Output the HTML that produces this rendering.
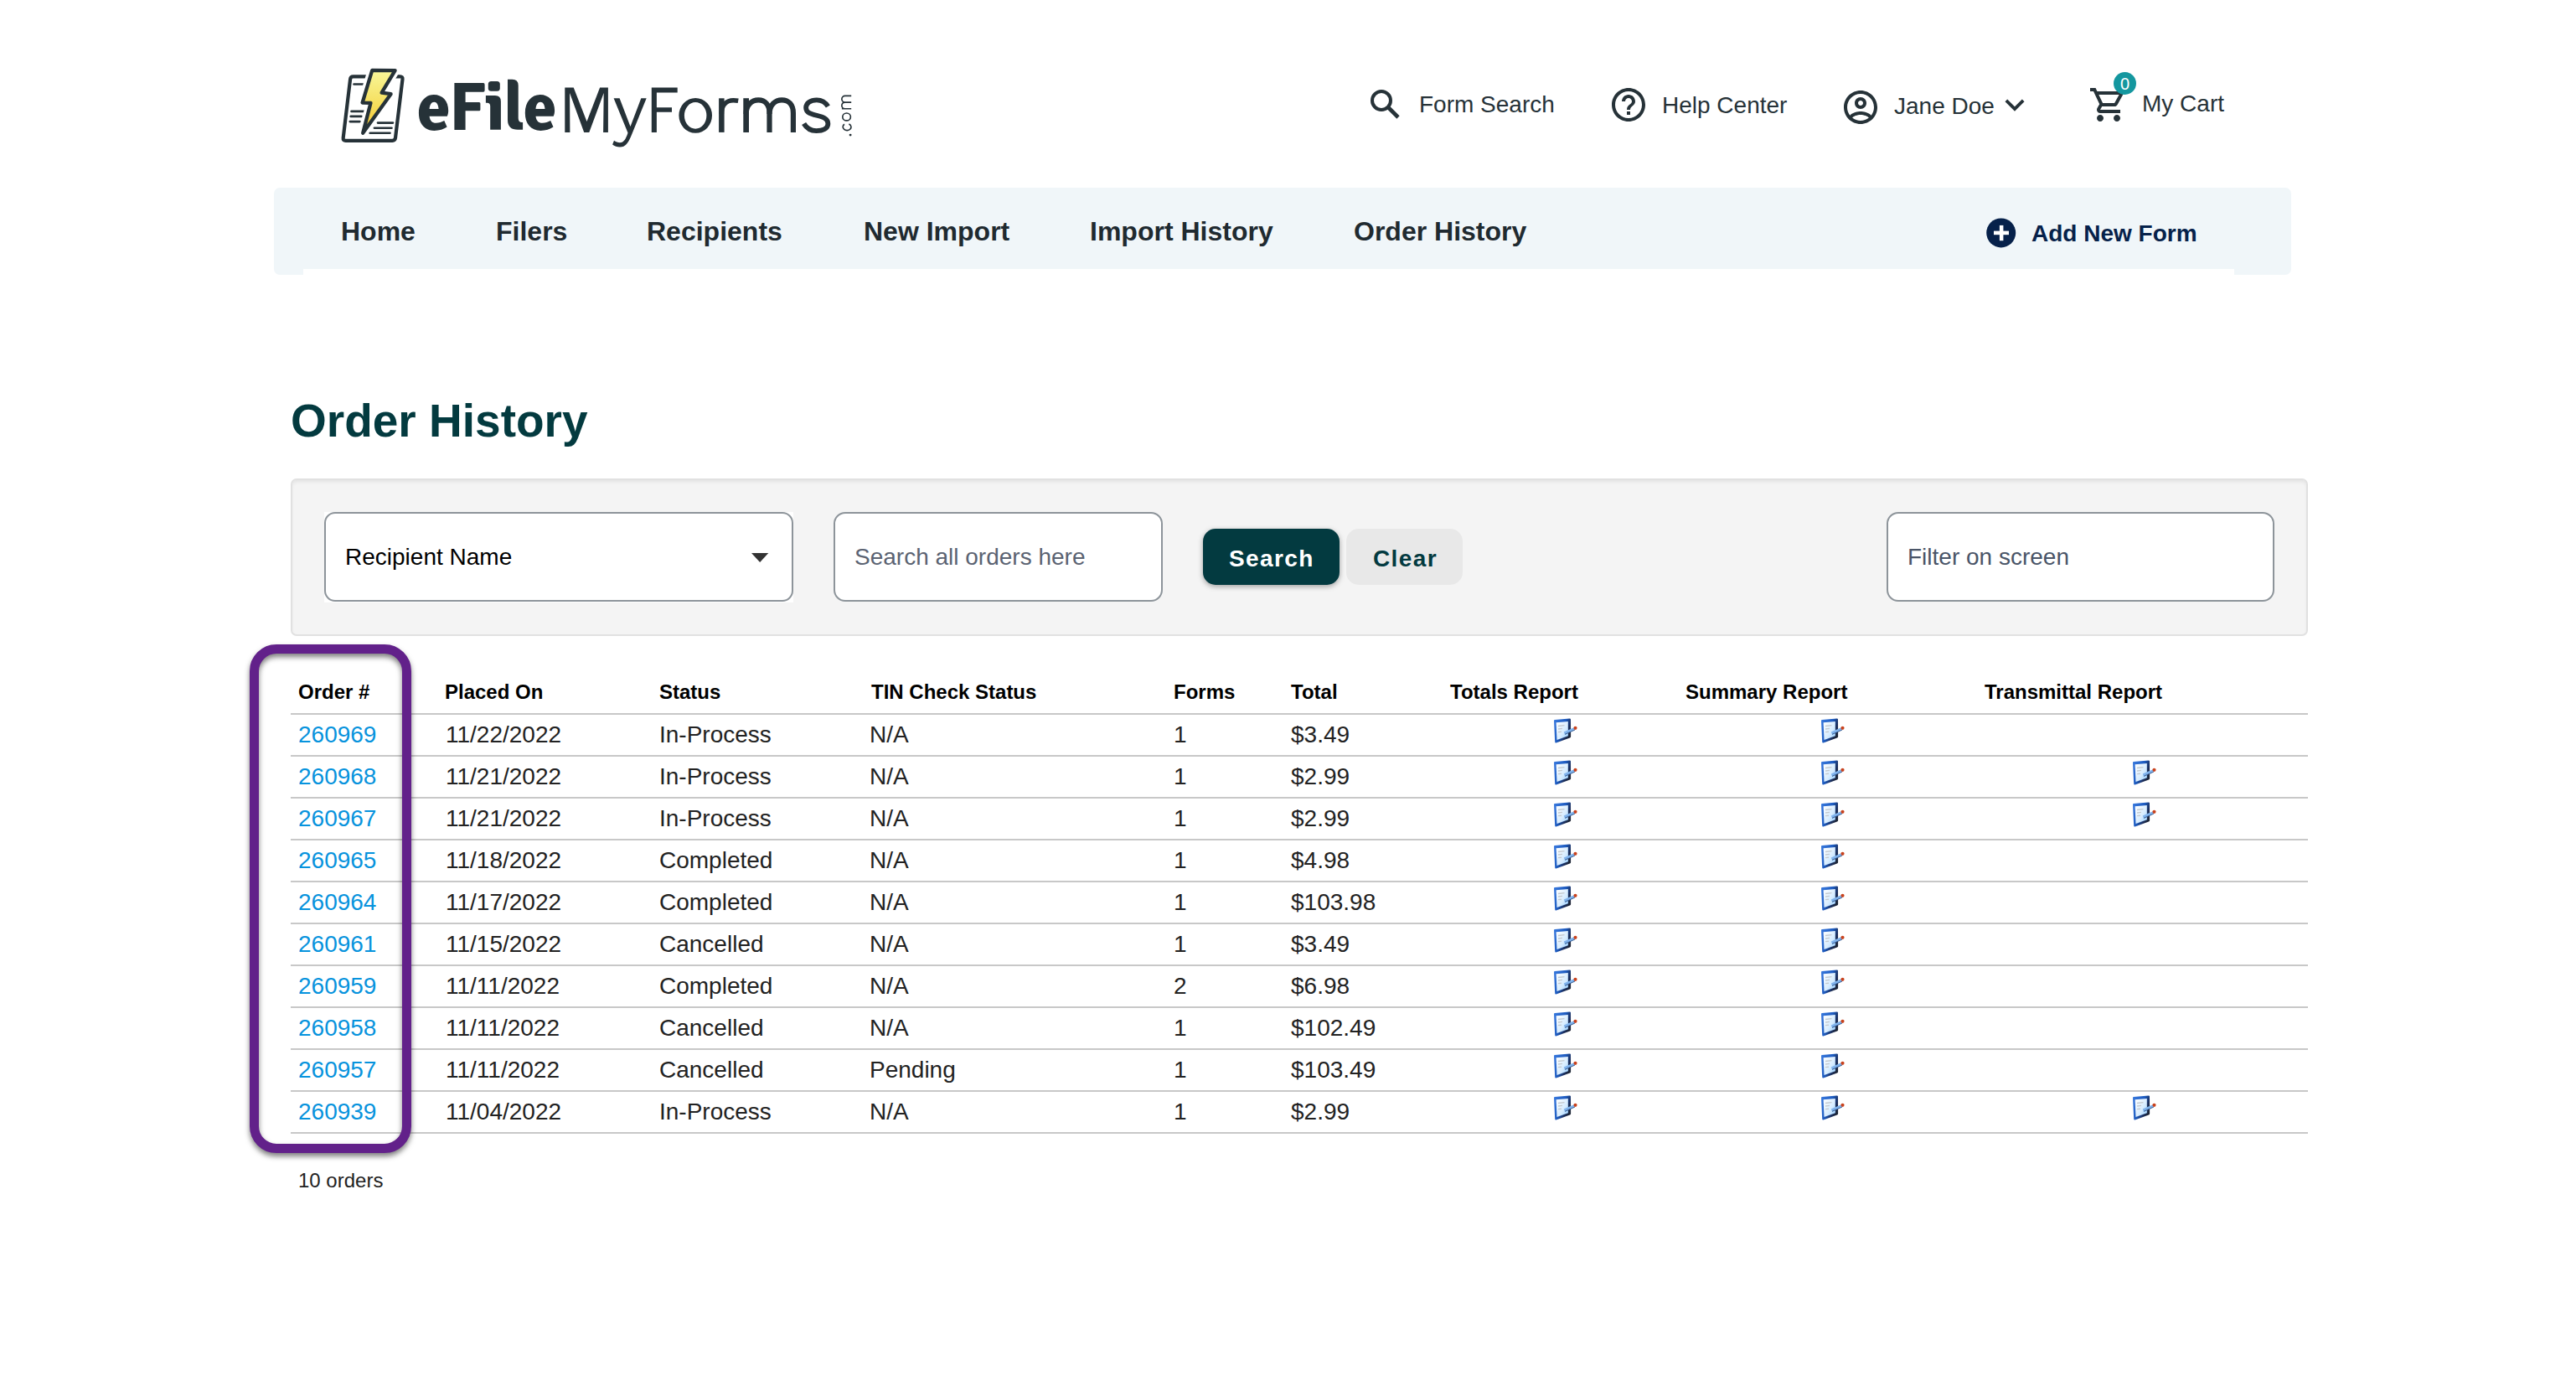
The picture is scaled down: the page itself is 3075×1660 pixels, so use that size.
<!DOCTYPE html>
<html>
<head>
<meta charset="utf-8">
<style>
html,body{margin:0;padding:0;background:#fff;}
body{width:3075px;height:1660px;position:relative;overflow:hidden;font-family:"Liberation Sans",sans-serif;}
.a{position:absolute;white-space:nowrap;line-height:1;}
.hdr{font-size:28px;color:#263238;}
.nav{font-size:32px;font-weight:bold;color:#1f2a30;}
.th{font-size:24px;font-weight:bold;color:#000;}
.td{font-size:28px;color:#222;}
.lk{font-size:28px;color:#0793dd;}
.line{position:absolute;left:347px;width:2408px;height:2px;background:#c8c8c8;}
.ic{position:absolute;width:30px;height:30px;}
</style>
</head>
<body>

<!-- LOGO -->
<svg class="a" style="left:400px;top:75px" width="100" height="105" viewBox="400 75 100 105">
<defs><linearGradient id="bolt" x1="0" y1="0" x2="0" y2="1"><stop offset="0" stop-color="#f8f79a"/><stop offset="0.55" stop-color="#f6de5c"/><stop offset="1" stop-color="#f5c531"/></linearGradient></defs>
<path d="M421.6 91.3 L477.6 91.3 Q480.9 91.3 480.5 94.6 L472 164.6 Q471.6 167.8 468.4 167.8 L412.6 167.8 Q409.3 167.8 409.7 164.6 L418.1 94.5 Q418.5 91.3 421.6 91.3 Z" fill="#fff" stroke="#263238" stroke-width="4.2"/>
<g stroke="#263238" stroke-width="2.6" stroke-linecap="round">
<line x1="422.5" y1="100.5" x2="433.5" y2="100.5"/>
<line x1="419.5" y1="132.9" x2="435.2" y2="132.9"/>
<line x1="418.7" y1="138.9" x2="431.4" y2="138.9"/>
<line x1="417.8" y1="145.1" x2="429.4" y2="145.1"/>
<line x1="451" y1="146.6" x2="469" y2="146.6"/>
<line x1="446.9" y1="152.7" x2="467.5" y2="152.7"/>
<line x1="441.6" y1="158.7" x2="465.5" y2="158.7"/>
</g>
<path d="M444.2 84 L471.6 84.1 L455.6 110.6 L466.6 112.2 L433.2 158.8 L442.5 122.8 L432.6 122.6 Z" fill="url(#bolt)" stroke="#fff" stroke-width="11" stroke-linejoin="round"/>
<path d="M444.2 84 L471.6 84.1 L455.6 110.6 L466.6 112.2 L433.2 158.8 L442.5 122.8 L432.6 122.6 Z" fill="url(#bolt)" stroke="#263238" stroke-width="4.3" stroke-linejoin="round"/>
</svg>
<svg class="a" style="left:495px;top:88px" width="540" height="92" viewBox="495 88 540 92">
<g fill="#263238">
<path fill-rule="evenodd" d="M533.8 138.7 L512.6 138.7 C513.2 143.8 515.8 146.8 520.5 146.8 C524 146.8 527.5 145.6 530.3 144.1 L533.6 151.6 C529.8 154.3 524.5 155.9 518.5 155.9 C506.5 155.9 499.9 147.5 499.9 134.8 C499.9 121.8 507.5 113.1 517.8 113.1 C528.5 113.1 535.2 121 535.2 132 C535.2 134.5 534.6 137 533.8 138.7 Z M512.6 130 L523.6 130 C523.3 125 521.3 121.7 518.2 121.7 C515 121.7 513 125 512.6 130 Z"/>
<path fill-rule="evenodd" transform="translate(126.9 0)" d="M533.8 138.7 L512.6 138.7 C513.2 143.8 515.8 146.8 520.5 146.8 C524 146.8 527.5 145.6 530.3 144.1 L533.6 151.6 C529.8 154.3 524.5 155.9 518.5 155.9 C506.5 155.9 499.9 147.5 499.9 134.8 C499.9 121.8 507.5 113.1 517.8 113.1 C528.5 113.1 535.2 121 535.2 132 C535.2 134.5 534.6 137 533.8 138.7 Z M512.6 130 L523.6 130 C523.3 125 521.3 121.7 518.2 121.7 C515 121.7 513 125 512.6 130 Z"/>
<path d="M542.4 99.1 L577 99.1 Q578.6 99.1 578.6 101 L578.6 108 Q578.6 109.8 577 109.8 L555.6 109.8 L555.6 122 L572 122 Q573.4 122 573.4 123.5 L573.4 130.7 Q573.4 132.2 572 132.2 L555.6 132.2 L555.6 155.1 L542.4 155.1 Z"/>
<rect x="582.8" y="96.9" width="14" height="11.9" rx="3.5"/>
<path d="M579.9 114.1 L591 114.1 Q597.9 114.1 597.9 121 L597.9 154.8 L585.2 154.8 L585.2 126.8 Q585.2 122.8 581.5 122.8 L579.9 122.8 Z"/>
<path d="M606 94.7 L611.5 94.7 Q618.7 94.7 618.7 102 L618.7 141 Q618.7 146 623 146 L624.1 146 L624.1 154.8 L618 154.8 Q606 154.8 606 143 Z"/>
<path d="M674.3 157.9 L674.3 104.5 L684.7 104.5 L700.5 145 L716.1 104.5 L725.9 104.5 L725.9 157.9 L720.1 157.9 L720.7 111 L703.3 157.9 L697.2 157.9 L680.1 111 L680.4 157.9 Z"/>
<path d="M732.6 117.3 L739.6 117.3 L752.5 151 L765.3 117.3 L771.7 117.3 L753.5 162 C750 170.5 746.5 175.6 740 175.6 C736.5 175.6 733.5 174.3 731.1 172.6 L733 167.8 C735 169.3 737.5 170.2 740 170.2 C743.8 170.2 746 167.5 748.5 161.5 L749.5 158.5 Z"/>
<path d="M777.8 104.5 L808.7 104.5 L808.7 110.6 L783.9 110.6 L783.9 128.3 L802 128.3 L802 133.8 L783.9 133.8 L783.9 157.9 L777.8 157.9 Z"/>
<path fill-rule="evenodd" d="M810.4 137.85 A19.8 20.95 0 1 0 850 137.85 A19.8 20.95 0 1 0 810.4 137.85 Z M816.9 137.85 A13.25 15.85 0 1 0 843.4 137.85 A13.25 15.85 0 1 0 816.9 137.85 Z"/>
<rect x="858.1" y="117.3" width="6.5" height="40.6"/>
<rect x="887.3" y="117.2" width="6.7" height="40.8"/>
</g>
<g fill="none" stroke="#263238">
<path stroke-width="5.6" d="M861.3 136 C861.3 125 867.5 119.7 875.5 119.7 C877.5 119.7 879.5 119.9 881.2 120.2"/>
<path stroke-width="6.2" d="M890.6 136 C890.6 125 897.5 119.3 905.3 119.3 C913.5 119.3 918.5 125 918.5 135 L918.5 158"/>
<path stroke-width="6.2" d="M918.5 136 C918.5 125 925.5 119.3 933.3 119.3 C941.5 119.3 946.9 125 946.9 135 L946.9 158"/>
<path stroke-width="5.8" d="M988.4 127 C985.5 122.3 980.5 119.3 974.9 119.3 C967.5 119.3 962.1 123 962.1 128.5 C962.1 134.5 968 136 975 137.8 C982.5 139.7 988.4 141.5 988.4 147.8 C988.4 153.2 982.5 156.1 974.5 156.1 C967.5 156.1 962.5 152.5 959.6 147.5"/>
</g>
<g fill="none" stroke="#263238" stroke-width="1.65">
<path d="M1016.2 114.35 L1008.7 114.35 A3.85 3.85 0 0 0 1008.7 122.06 L1016.2 122.06 M1008.7 122.06 A3.85 3.85 0 0 0 1008.7 129.77 M1016.2 129.77 L1004.9 129.77"/>
<ellipse cx="1010.6" cy="139.45" rx="4.8" ry="4.45"/>
<path d="M1008 148.3 A4.9 4.1 0 1 0 1013.4 147.9"/>
</g>
<circle cx="1015.1" cy="161.1" r="1.45" fill="#263238"/>
</svg>

<!-- HEADER RIGHT -->
<svg class="a" style="left:1625px;top:96px" width="56" height="56" viewBox="1625 96 56 56"><circle cx="1649" cy="120" r="11" fill="none" stroke="#263238" stroke-width="4"/><line x1="1657" y1="128" x2="1669" y2="140" stroke="#263238" stroke-width="4.6"/></svg>
<svg class="a" style="left:1920px;top:101px" width="48" height="48" viewBox="0 0 24 24"><path fill="#263238" d="M11 18h2v-2h-2v2zm1-16C6.48 2 2 6.48 2 12s4.48 10 10 10 10-4.48 10-10S17.52 2 12 2zm0 18c-4.41 0-8-3.59-8-8s3.59-8 8-8 8 3.59 8 8-3.59 8-8 8zm0-14c-2.21 0-4 1.79-4 4h2c0-1.1.9-2 2-2s2 .9 2 2c0 2-3 1.75-3 5h2c0-2.250 3-2.5 3-5 0-2.21-1.79-4-4-4z"/></svg>
<svg class="a" style="left:2197px;top:104px" width="48" height="48" viewBox="0 0 24 24"><path fill="#263238" d="M12 2C6.48 2 2 6.48 2 12s4.48 10 10 10 10-4.48 10-10S17.52 2 12 2zM7.07 18.28c.43-.9 3.050-1.78 4.93-1.78s4.51.88 4.93 1.78C15.57 19.36 13.86 20 12 20s-3.57-.64-4.93-1.72zm11.29-1.45c-1.43-1.74-4.9-2.33-6.36-2.33s-4.93.59-6.36 2.33C4.62 15.49 4 13.82 4 12c0-4.41 3.59-8 8-8s8 3.59 8 8c0 1.82-.62 3.49-1.64 4.830zM12 6c-1.94 0-3.5 1.56-3.5 3.5S10.06 13 12 13s3.5-1.56 3.5-3.5S13.94 6 12 6zm0 5c-.83 0-1.5-.67-1.5-1.5S11.17 8 12 8s1.5.67 1.5 1.5S12.83 11 12 11z"/></svg>
<svg class="a" style="left:2382px;top:102px" width="46" height="46" viewBox="0 0 24 24"><path fill="#263238" d="M16.59 8.59L12 13.17 7.41 8.59 6 10l6 6 6-6z"/></svg>
<svg class="a" style="left:2493px;top:101px" width="48" height="48" viewBox="0 0 24 24"><path fill="#263238" d="M15.55 13c.75 0 1.41-.41 1.75-1.03l3.58-6.49c.37-.66-.11-1.480-.87-1.48H5.21l-.94-2H1v2h2l3.6 7.59-1.35 2.44C4.52 15.37 5.48 17 7 17h12v-2H7l1.1-2h7.45zM6.160 6h12.15l-2.76 5H8.53L6.16 6zM7 18c-1.1 0-1.99.9-1.99 2S5.9 22 7 22s2-.9 2-2-.9-2-2-2zm10 0c-1.1 0-1.99.9-1.99 2s.89 2 1.99 2 2-.9 2-2-.9-2-2-2z"/></svg>
<div class="a" style="left:2523px;top:86px;width:27px;height:27px;border-radius:50%;background:#14979f;"></div>
<div class="a" style="left:2531px;top:90px;font-size:20px;color:#fff;">0</div>

<div class="a hdr" style="left:1694px;top:111px">Form Search</div>
<div class="a hdr" style="left:1984px;top:112px">Help Center</div>
<div class="a hdr" style="left:2261px;top:113px">Jane Doe</div>
<div class="a hdr" style="left:2557px;top:110px">My Cart</div>

<!-- NAV -->
<div class="a" style="left:327px;top:224px;width:2408px;height:104px;background:#f0f6f9;border-radius:7px;"></div>
<div class="a" style="left:362px;top:321px;width:2305px;height:8px;background:#fff;"></div>
<div class="a nav" style="left:407px;top:260px">Home</div>
<div class="a nav" style="left:592px;top:260px">Filers</div>
<div class="a nav" style="left:772px;top:260px">Recipients</div>
<div class="a nav" style="left:1031px;top:260px">New Import</div>
<div class="a nav" style="left:1301px;top:260px">Import History</div>
<div class="a nav" style="left:1616px;top:260px">Order History</div>
<svg class="a" style="left:2371px;top:260px" width="36" height="36" viewBox="2371 260 36 36"><circle cx="2388.7" cy="277.9" r="17.5" fill="#06214a"/><rect x="2380" y="275.6" width="18" height="4.6" fill="#fff"/><rect x="2386.9" y="268.9" width="4.5" height="18.3" fill="#fff"/></svg>
<div class="a" style="left:2425px;top:265px;font-size:28px;font-weight:bold;color:#06214a;">Add New Form</div>

<!-- TITLE -->
<div class="a" style="left:347px;top:475px;font-size:55px;font-weight:bold;color:#033a3f;">Order History</div>

<!-- PANEL -->
<div class="a" style="left:347px;top:571px;width:2404px;height:184px;background:#f4f4f4;border:2px solid #e1e1e1;border-radius:7px;box-shadow:inset 0 3px 4px -1px rgba(0,0,0,.07);"></div>
<div class="a" style="left:387px;top:611px;width:560px;height:108px;background:#fff;"></div><div class="a" style="left:387px;top:611px;width:556px;height:103px;border:2px solid #8d949a;border-radius:13px;"></div>
<div class="a" style="left:412px;top:651px;font-size:28px;color:#000;">Recipient Name</div>
<svg class="a" style="left:895px;top:655px" width="25" height="20" viewBox="895 655 25 20"><path d="M897 660 L917.3 660 L907.15 671 Z" fill="#333"/></svg>
<div class="a" style="left:995px;top:611px;width:389px;height:103px;background:#fff;border:2px solid #8d949a;border-radius:14px;"></div>
<div class="a" style="left:1020px;top:651px;font-size:28px;color:#5b6372;">Search all orders here</div>
<div class="a" style="left:1436px;top:631px;width:163px;height:67px;background:#033a40;border-radius:15px;box-shadow:0 2px 6px rgba(0,0,0,.35);"></div>
<div class="a" style="left:1467px;top:653px;font-size:28px;font-weight:bold;color:#fff;letter-spacing:1.4px;">Search</div>
<div class="a" style="left:1607px;top:631px;width:139px;height:67px;background:#e8e8e8;border-radius:15px;"></div>
<div class="a" style="left:1639px;top:653px;font-size:28px;font-weight:bold;color:#033a40;letter-spacing:1.4px;">Clear</div>
<div class="a" style="left:2252px;top:611px;width:459px;height:103px;background:#fff;border:2px solid #8d949a;border-radius:14px;"></div>
<div class="a" style="left:2277px;top:651px;font-size:28px;color:#4a5568;">Filter on screen</div>

<!-- TABLE -->
<svg width="0" height="0" style="position:absolute"><defs>
<linearGradient id="rg" x1="0" y1="0" x2="1" y2="0.6"><stop offset="0" stop-color="#3a7be0"/><stop offset="0.55" stop-color="#1f5cc0"/><stop offset="0.8" stop-color="#1a3060"/><stop offset="1" stop-color="#1c2536"/></linearGradient>
<linearGradient id="rg2" x1="0" y1="0" x2="1" y2="1"><stop offset="0" stop-color="#ffffff"/><stop offset="0.6" stop-color="#d6ecff"/><stop offset="1" stop-color="#8fcaff"/></linearGradient>
<filter id="rb" x="-10%" y="-10%" width="120%" height="120%"><feGaussianBlur stdDeviation="0.35"/></filter>
<symbol id="rep" viewBox="0 0 30 30">
<g filter="url(#rb)">
<path d="M1 3.2 Q0.9 2.2 2 2.1 L19.6 0.4 Q21 0.3 21 1.6 L21.1 22 Q21.1 23.1 20 23.5 L3.6 29.4 Q2.3 29.8 2.2 28.5 Z" fill="url(#rg)"/>
<path d="M3.6 5.3 L17.8 3.9 L17.9 21.2 L4.5 25.9 Z" fill="url(#rg2)"/>
<path d="M6 9.5 L13.5 8.6 M6 13 L11 12.4 M6 16.6 L10 16.2" stroke="#c3c9cf" stroke-width="1.4"/>
<path d="M12.8 16.6 L24.8 11.2 L26 14 L14 19.4 Z" fill="#7fb2ec"/>
<path d="M14 19.4 L26 14" stroke="#2a4f86" stroke-width="0.9"/>
<circle cx="26.5" cy="11.8" r="2.1" fill="#c9431f"/>
</g>
</symbol></defs></svg>

<!-- ROWS -->
<div class="a th" style="left:356px;top:814px">Order #</div>
<div class="a th" style="left:531px;top:814px">Placed On</div>
<div class="a th" style="left:787px;top:814px">Status</div>
<div class="a th" style="left:1040px;top:814px">TIN Check Status</div>
<div class="a th" style="left:1401px;top:814px">Forms</div>
<div class="a th" style="left:1541px;top:814px">Total</div>
<div class="a th" style="left:1731px;top:814px">Totals Report</div>
<div class="a th" style="left:2012px;top:814px">Summary Report</div>
<div class="a th" style="left:2369px;top:814px">Transmittal Report</div>
<div class="line" style="top:851px"></div>
<div class="a lk" style="left:356px;top:863px">260969</div>
<div class="a td" style="left:532px;top:863px">11/22/2022</div>
<div class="a td" style="left:787px;top:863px">In-Process</div>
<div class="a td" style="left:1038px;top:863px">N/A</div>
<div class="a td" style="left:1401px;top:863px">1</div>
<div class="a td" style="left:1541px;top:863px">$3.49</div>
<svg class="ic" style="left:1854px;top:857px"><use href="#rep"/></svg>
<svg class="ic" style="left:2173px;top:857px"><use href="#rep"/></svg>
<div class="line" style="top:901px"></div>
<div class="a lk" style="left:356px;top:913px">260968</div>
<div class="a td" style="left:532px;top:913px">11/21/2022</div>
<div class="a td" style="left:787px;top:913px">In-Process</div>
<div class="a td" style="left:1038px;top:913px">N/A</div>
<div class="a td" style="left:1401px;top:913px">1</div>
<div class="a td" style="left:1541px;top:913px">$2.99</div>
<svg class="ic" style="left:1854px;top:907px"><use href="#rep"/></svg>
<svg class="ic" style="left:2173px;top:907px"><use href="#rep"/></svg>
<svg class="ic" style="left:2545px;top:907px"><use href="#rep"/></svg>
<div class="line" style="top:951px"></div>
<div class="a lk" style="left:356px;top:963px">260967</div>
<div class="a td" style="left:532px;top:963px">11/21/2022</div>
<div class="a td" style="left:787px;top:963px">In-Process</div>
<div class="a td" style="left:1038px;top:963px">N/A</div>
<div class="a td" style="left:1401px;top:963px">1</div>
<div class="a td" style="left:1541px;top:963px">$2.99</div>
<svg class="ic" style="left:1854px;top:957px"><use href="#rep"/></svg>
<svg class="ic" style="left:2173px;top:957px"><use href="#rep"/></svg>
<svg class="ic" style="left:2545px;top:957px"><use href="#rep"/></svg>
<div class="line" style="top:1001px"></div>
<div class="a lk" style="left:356px;top:1013px">260965</div>
<div class="a td" style="left:532px;top:1013px">11/18/2022</div>
<div class="a td" style="left:787px;top:1013px">Completed</div>
<div class="a td" style="left:1038px;top:1013px">N/A</div>
<div class="a td" style="left:1401px;top:1013px">1</div>
<div class="a td" style="left:1541px;top:1013px">$4.98</div>
<svg class="ic" style="left:1854px;top:1007px"><use href="#rep"/></svg>
<svg class="ic" style="left:2173px;top:1007px"><use href="#rep"/></svg>
<div class="line" style="top:1051px"></div>
<div class="a lk" style="left:356px;top:1063px">260964</div>
<div class="a td" style="left:532px;top:1063px">11/17/2022</div>
<div class="a td" style="left:787px;top:1063px">Completed</div>
<div class="a td" style="left:1038px;top:1063px">N/A</div>
<div class="a td" style="left:1401px;top:1063px">1</div>
<div class="a td" style="left:1541px;top:1063px">$103.98</div>
<svg class="ic" style="left:1854px;top:1057px"><use href="#rep"/></svg>
<svg class="ic" style="left:2173px;top:1057px"><use href="#rep"/></svg>
<div class="line" style="top:1101px"></div>
<div class="a lk" style="left:356px;top:1113px">260961</div>
<div class="a td" style="left:532px;top:1113px">11/15/2022</div>
<div class="a td" style="left:787px;top:1113px">Cancelled</div>
<div class="a td" style="left:1038px;top:1113px">N/A</div>
<div class="a td" style="left:1401px;top:1113px">1</div>
<div class="a td" style="left:1541px;top:1113px">$3.49</div>
<svg class="ic" style="left:1854px;top:1107px"><use href="#rep"/></svg>
<svg class="ic" style="left:2173px;top:1107px"><use href="#rep"/></svg>
<div class="line" style="top:1151px"></div>
<div class="a lk" style="left:356px;top:1163px">260959</div>
<div class="a td" style="left:532px;top:1163px">11/11/2022</div>
<div class="a td" style="left:787px;top:1163px">Completed</div>
<div class="a td" style="left:1038px;top:1163px">N/A</div>
<div class="a td" style="left:1401px;top:1163px">2</div>
<div class="a td" style="left:1541px;top:1163px">$6.98</div>
<svg class="ic" style="left:1854px;top:1157px"><use href="#rep"/></svg>
<svg class="ic" style="left:2173px;top:1157px"><use href="#rep"/></svg>
<div class="line" style="top:1201px"></div>
<div class="a lk" style="left:356px;top:1213px">260958</div>
<div class="a td" style="left:532px;top:1213px">11/11/2022</div>
<div class="a td" style="left:787px;top:1213px">Cancelled</div>
<div class="a td" style="left:1038px;top:1213px">N/A</div>
<div class="a td" style="left:1401px;top:1213px">1</div>
<div class="a td" style="left:1541px;top:1213px">$102.49</div>
<svg class="ic" style="left:1854px;top:1207px"><use href="#rep"/></svg>
<svg class="ic" style="left:2173px;top:1207px"><use href="#rep"/></svg>
<div class="line" style="top:1251px"></div>
<div class="a lk" style="left:356px;top:1263px">260957</div>
<div class="a td" style="left:532px;top:1263px">11/11/2022</div>
<div class="a td" style="left:787px;top:1263px">Cancelled</div>
<div class="a td" style="left:1038px;top:1263px">Pending</div>
<div class="a td" style="left:1401px;top:1263px">1</div>
<div class="a td" style="left:1541px;top:1263px">$103.49</div>
<svg class="ic" style="left:1854px;top:1257px"><use href="#rep"/></svg>
<svg class="ic" style="left:2173px;top:1257px"><use href="#rep"/></svg>
<div class="line" style="top:1301px"></div>
<div class="a lk" style="left:356px;top:1313px">260939</div>
<div class="a td" style="left:532px;top:1313px">11/04/2022</div>
<div class="a td" style="left:787px;top:1313px">In-Process</div>
<div class="a td" style="left:1038px;top:1313px">N/A</div>
<div class="a td" style="left:1401px;top:1313px">1</div>
<div class="a td" style="left:1541px;top:1313px">$2.99</div>
<svg class="ic" style="left:1854px;top:1307px"><use href="#rep"/></svg>
<svg class="ic" style="left:2173px;top:1307px"><use href="#rep"/></svg>
<svg class="ic" style="left:2545px;top:1307px"><use href="#rep"/></svg>
<div class="line" style="top:1351px"></div>
<div class="a" style="left:356px;top:1397px;font-size:24px;color:#222;">10 orders</div>
<!-- /ROWS -->
<!-- PURPLE -->
<div class="a" style="left:298px;top:769px;width:171px;height:585px;border:11px solid #62218a;border-radius:32px;filter:drop-shadow(0 4px 3px rgba(0,0,0,.5));"></div>
</body>
</html>
